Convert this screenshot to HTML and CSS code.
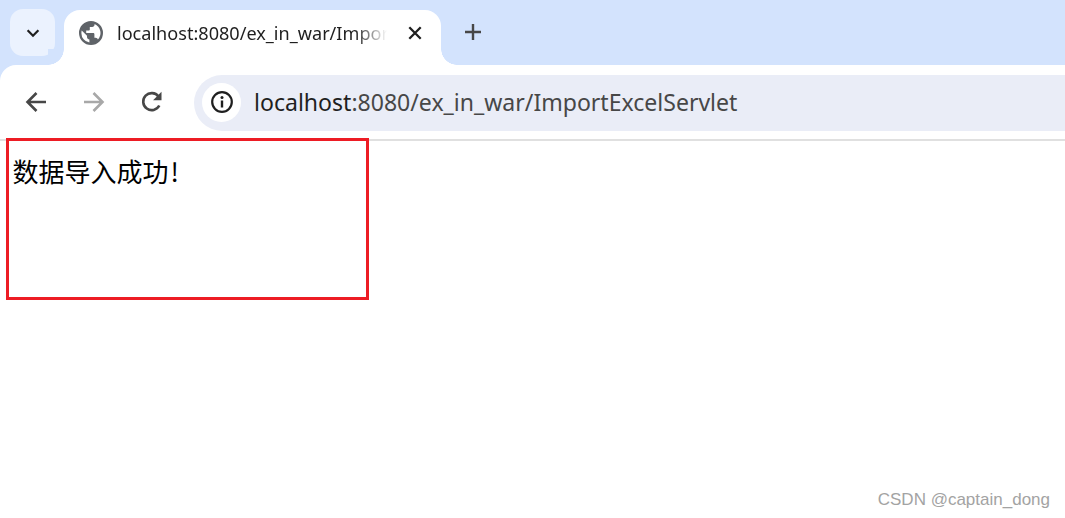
FILE: index.html
```html
<!DOCTYPE html>
<html lang="zh">
<head>
<meta charset="utf-8">
<title>localhost:8080/ex_in_war/ImportExcelServlet</title>
<link rel="stylesheet" href="styles.css">
</head>
<body>
<div class="page">
  <div class="tabstrip">
    <div class="tab-search">
      <svg class="ic" width="16" height="16" viewBox="0 0 16 16"><path d="M2.600 5.300 8 10.700l5.400-5.400" fill="none" stroke="#1f1f1f" stroke-width="2.200"/></svg>
    </div>
    <div class="tab">
      <svg class="favicon" width="24" height="24" viewBox="0 0 24 24"><path fill="#5f6368" fill-rule="evenodd" d="M12 0a12 12 0 1 0 0 24 12 12 0 0 0 0-24ZM2.400 12c0-.9.1-1.700.3-2.500L8 14.800v1.200c0 1.300 1.100 2.400 2.400 2.400v3.200A9.600 9.600 0 0 1 2.400 12Zm16.500 6.500c-.3-1-1.200-1.700-2.300-1.700h-1.200v-3.600c0-.7-.5-1.200-1.200-1.200H7.200v-2.400h2.400c.7 0 1.200-.5 1.200-1.200V6h2.400c1.300 0 2.400-1.100 2.400-2.400v-.5a9.600 9.600 0 0 1 3.300 15.400Z"/></svg>
      <span class="tab-title">localhost:8080/ex_in_war/ImportExcelServlet</span>
      <svg class="tab-close" width="16" height="16" viewBox="0 0 16 16"><path d="m2.300 2.300 11.400 11.400M13.700 2.300 2.300 13.700" stroke="#1f1f1f" stroke-width="2.300" fill="none"/></svg>
    </div>
    <svg class="new-tab" width="18" height="18" viewBox="0 0 18 18"><path d="M9 1v16M1 9h16" stroke="#474747" stroke-width="2.400" fill="none"/></svg>
  </div>
  <div class="toolbar-back">
    <div class="toolbar">
      <div class="nav-icons">
        <svg width="24" height="24" viewBox="0 0 24 24"><path d="M22 12H4M12.500 3 3.500 12l9 9" fill="none" stroke="#474747" stroke-width="2.600"/></svg>
        <svg width="24" height="24" viewBox="0 0 24 24"><path d="M2 12h18M11.500 3l9 9-9 9" fill="none" stroke="#a8a8a8" stroke-width="2.600"/></svg>
        <svg width="24" height="24" viewBox="0 0 24 24"><path d="M19.300 15.500A8.500 8.500 0 1 1 18.500 6.500" fill="none" stroke="#474747" stroke-width="2.600"/><path d="M21.500 1.800v8.400h-8.400z" fill="#474747"/></svg>
      </div>
      <div class="omnibox">
        <div class="info-chip">
          <svg width="24" height="24" viewBox="0 0 24 24"><circle cx="12" cy="12" r="9.800" fill="none" stroke="#1f1f1f" stroke-width="2.200"/><path d="M12 10.500v7" stroke="#1f1f1f" stroke-width="2.400"/><circle cx="12" cy="7.400" r="1.500" fill="#1f1f1f"/></svg>
        </div>
        <span class="url"><span class="host">localhost</span>:8080/ex_in_war/ImportExcelServlet</span>
      </div>
    </div>
  </div>
  <main class="content">
    <p class="message">数据导入成功<span class="bang">!</span></p>
    <div class="watermark">CSDN @captain_dong</div>
  </main>
  <div class="highlight"></div>
</div>
</body>
</html>
```
FILE: styles.css
```css
* { box-sizing: border-box; }
html, body { margin: 0; padding: 0; height: 100%; overflow: hidden; background: #fff; }
body { font-family: "Noto Sans", "Liberation Sans", "Noto Sans CJK SC", sans-serif; }
.page { position: relative; display: flex; flex-direction: column; height: 518px; }
.tabstrip { display: flex; align-items: flex-start; height: 65px; background: #d3e3fd; padding: 9px 0 0 10px; }
.tab-search { width: 45px; height: 47px; background: #ebf2fe; border-radius: 13px; display: flex; align-items: center; justify-content: center; }
.tab { position: relative; width: 377px; height: 55px; margin: 1px 0 0 9px; background: #fff; border-radius: 16px 16px 0 0; display: flex; align-items: center; padding: 0 18px 10px 15px; }
.tab::before, .tab::after { content: ""; position: absolute; bottom: 0; width: 16px; height: 16px; background: radial-gradient(circle at var(--cx) 0, #d3e3fd 15.500px, #fff 16px); }
.tab::before { --cx: 0; left: -16px; }
.tab::after { --cx: 100%; right: -16px; }
.favicon { flex: none; }
.tab-title { flex: 1; margin-left: 14px; font-size: 18.100px; color: #1f1f1f; white-space: nowrap; overflow: hidden; min-width: 0; -webkit-mask-image: linear-gradient(to right, #000 88%, transparent 100%); mask-image: linear-gradient(to right, #000 88%, transparent 100%); }
.tab-close { flex: none; margin-left: 20px; }
.new-tab { margin: 14px 0 0 23px; }
.toolbar-back { background: #d3e3fd; height: 74px; }
.toolbar { height: 74px; background: #fff; border-radius: 16px 0 0 0; display: flex; align-items: center; padding: 0 0 0 24px; }
.nav-icons { display: flex; gap: 34px; }
.omnibox { flex: 1; height: 56px; margin-left: 30px; margin-top: 2px; padding: 0 0 2px 8px; background: #eaedf7; border-radius: 28px 0 0 28px; display: flex; align-items: center; }
.info-chip { width: 39px; height: 39px; border-radius: 50%; background: #fff; display: flex; align-items: center; justify-content: center; }
.url { margin-left: 13px; font-size: 23.050px; color: #474747; white-space: nowrap; }
.host { color: #1f1f1f; }
.content { flex: 1; display: flex; flex-direction: column; border-top: 2px solid #e0e0e0; padding: 12px 0 0 12.500px; }
.message { margin: 0; font-size: 26px; line-height: 36px; color: #000; font-family: "Noto Sans CJK SC", "Noto Sans", sans-serif; }
.bang { margin-left: 2px; }
.watermark { margin-top: auto; margin-bottom: 8px; margin-right: 15px; align-self: flex-end; font-size: 17px; line-height: 20px; color: #a3a3a3; font-family: "Liberation Sans", sans-serif; }
.highlight { position: absolute; left: 6px; top: 138px; width: 363px; height: 162px; border: 3px solid #ed1c24; pointer-events: none; }
```
